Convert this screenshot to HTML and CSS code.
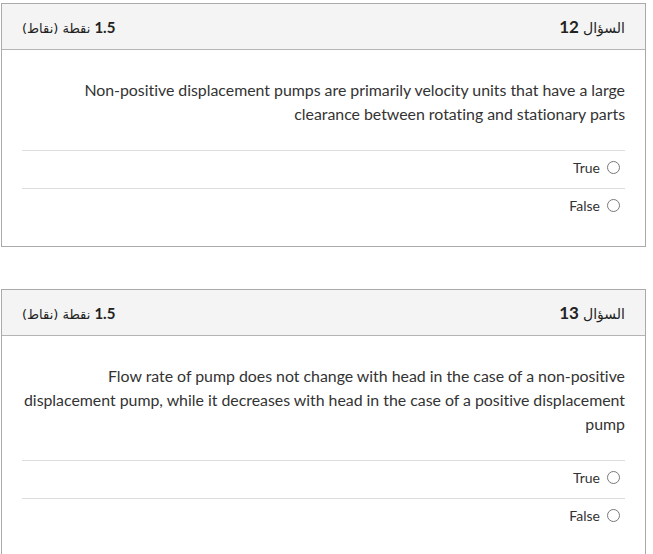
FILE: index.html
```
<!DOCTYPE html>
<html lang="ar" dir="rtl">
<head>
<meta charset="utf-8">
<link rel="stylesheet" href="styles.css">
</head>
<body>
<div class="page">
  <div class="card">
    <div class="card-head">
      <span class="q-title"><span class="ar">السؤال</span> <span class="num">12</span></span>
      <span class="q-points"><span class="num">1.5</span> <span class="ar">نقطة (نقاط)</span></span>
    </div>
    <div class="card-body">
      <p class="q-text" dir="ltr">Non-positive displacement pumps are primarily velocity units that have a large clearance between rotating and stationary parts</p>
      <div class="options">
        <label class="opt"><span class="radio"></span><span class="opt-label">True</span></label>
        <label class="opt"><span class="radio"></span><span class="opt-label">False</span></label>
      </div>
    </div>
  </div>
  <div class="card">
    <div class="card-head">
      <span class="q-title"><span class="ar">السؤال</span> <span class="num">13</span></span>
      <span class="q-points"><span class="num">1.5</span> <span class="ar">نقطة (نقاط)</span></span>
    </div>
    <div class="card-body">
      <p class="q-text" dir="ltr">Flow rate of pump does not change with head in the case of a non-positive displacement pump, while it decreases with head in the case of a positive displacement pump</p>
      <div class="options">
        <label class="opt"><span class="radio"></span><span class="opt-label">True</span></label>
        <label class="opt"><span class="radio"></span><span class="opt-label">False</span></label>
      </div>
    </div>
  </div>
</div>
</body>
</html>
```
FILE: styles.css
```
html, body {
  margin: 0;
  padding: 0;
  background: #fff;
}
body {
  font-family: Lato, "DejaVu Sans", sans-serif;
  color: #333;
}
.page {
  width: 645px;
  margin: 0 auto 0 0;
  padding: 3px 0 0 1px;
  display: flex;
  flex-direction: column;
  gap: 42px;
}
.card {
  border: 1px solid #aaa;
  background: #fff;
}
.card-head {
  height: 45px;
  background: #f4f4f4;
  border-bottom: 1px solid #b4b4b4;
  display: flex;
  align-items: center;
  justify-content: space-between;
  padding: 0 20px;
  color: #222;
}
.q-title .num {
  font-size: 17px;
  font-weight: bold;
}
.q-title .ar {
  font-family: "DejaVu Sans", sans-serif;
  font-size: 14px;
}
.q-points .num {
  font-size: 15px;
  font-weight: bold;
}
.q-points .ar {
  font-family: "DejaVu Sans", sans-serif;
  font-size: 13px;
}
.card-body {
  padding: 28px 20px 20px;
}
.q-text {
  margin: 0 0 24px;
  font-size: 15.9px;
  letter-spacing: -0.02px;
  line-height: 24px;
  text-align: right;
}
.opt {
  box-sizing: border-box;
  display: flex;
  align-items: center;
  gap: 7px;
  height: 38px;
  padding-bottom: 4px;
  border-top: 1px solid #ddd;
  font-size: 14px;
  color: #333;
  padding-right: 5px;
}
.radio {
  width: 11px;
  height: 11px;
  border: 1px solid #777;
  border-radius: 50%;
  background: #fff;
}
```
